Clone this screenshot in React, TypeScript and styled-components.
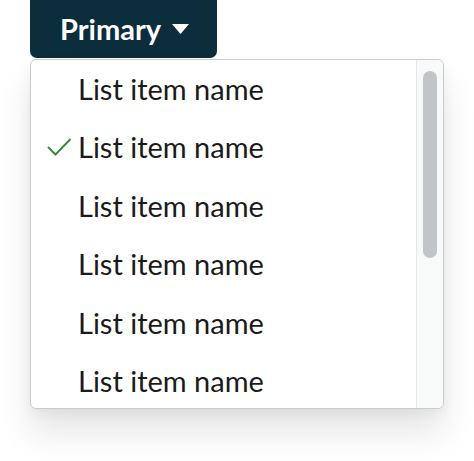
import React from "react";
import styled, { createGlobalStyle } from "styled-components";

const Global = createGlobalStyle`
  html, body { margin: 0; padding: 0; background: #ffffff; }
  body { font-family: Lato, "Noto Sans", sans-serif; }
`;

const Page = styled.div`
  padding: 0 0 60px 30px;
  display: flex;
  flex-direction: column;
  align-items: flex-start;
`;

const Trigger = styled.button`
  display: flex;
  align-items: center;
  gap: 11px;
  height: 58px;
  padding: 0 28px 2px 30px;
  background: #0c2d3b;
  color: #ffffff;
  border: none;
  border-radius: 0 0 7px 7px;
  font-family: Lato, sans-serif;
  font-weight: 700;
  font-size: 29px;
  cursor: pointer;
`;

const Caret = styled.svg`
  width: 17px;
  height: 10px;
  margin-top: 1px;
`;

const Menu = styled.div`
  margin-top: 1px;
  width: 414px;
  height: 350px;
  box-sizing: border-box;
  border: 1px solid #c9cbcc;
  border-radius: 6px;
  background: #ffffff;
  box-shadow: 0 24px 34px rgba(0, 0, 0, 0.1), 0 4px 12px rgba(0, 0, 0, 0.05);
  display: flex;
  overflow: hidden;
`;

const List = styled.ul`
  list-style: none;
  margin: 0;
  padding: 0;
  flex: 1;
  overflow: hidden;
`;

const Item = styled.li`
  height: 58.5px;
  display: flex;
  align-items: center;
  padding-left: 16px;
  padding-bottom: 2px;
  box-sizing: border-box;
  font-size: 29px;
  color: #1a1a1a;
`;

const CheckSlot = styled.span`
  width: 31px;
  display: flex;
  align-items: center;
`;

const Track = styled.div`
  width: 27px;
  background: #f8f9f9;
  border-left: 1px solid #e6e8e8;
  padding: 11px 0 0 6px;
  box-sizing: border-box;
`;

const Thumb = styled.div`
  width: 14px;
  height: 187px;
  border-radius: 7px;
  background: #c1c5c7;
`;

const items = [false, true, false, false, false, false];

export default function App() {
  return (
    <>
      <Global />
      <Page>
        <Trigger>
          Primary
          <Caret viewBox="0 0 17 10">
            <path d="M0 0 L17 0 L8.5 10 Z" fill="#ffffff" />
          </Caret>
        </Trigger>
        <Menu>
          <List>
            {items.map((checked, i) => (
              <Item key={i}>
                <CheckSlot>
                  {checked && (
                    <svg width="25" height="20" viewBox="0 0 25 20">
                      <path
                        d="M1 10 L8.5 17.5 L23.5 2"
                        fill="none"
                        stroke="#3a8b3c"
                        strokeWidth="2"
                      />
                    </svg>
                  )}
                </CheckSlot>
                List item name
              </Item>
            ))}
          </List>
          <Track>
            <Thumb />
          </Track>
        </Menu>
      </Page>
    </>
  );
}
